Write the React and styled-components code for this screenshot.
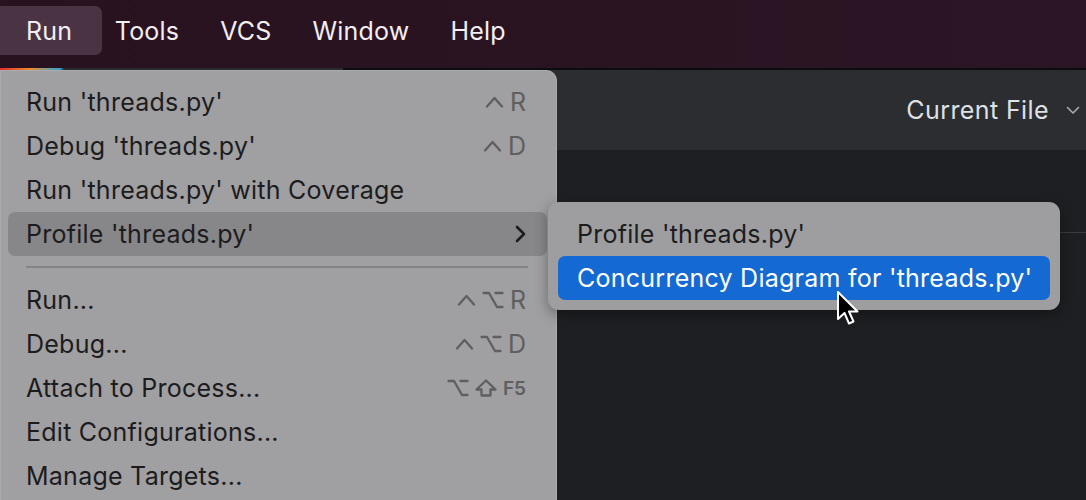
import React from 'react';
import styled, { createGlobalStyle } from 'styled-components';

const GlobalStyle = createGlobalStyle`
  html, body {
    margin: 0;
    padding: 0;
    background: #1e1f22;
    overflow: hidden;
  }
  body {
    font-family: Inter, "Noto Sans", "Liberation Sans", sans-serif;
    -webkit-font-smoothing: antialiased;
  }
`;

const Screen = styled.div`
  position: relative;
  width: 1086px;
  height: 500px;
  display: flex;
  flex-direction: column;
  overflow: hidden;
`;

const MenuBar = styled.div`
  height: 68px;
  flex: none;
  display: flex;
  align-items: flex-start;
  padding-top: 6px;
  box-sizing: border-box;
  background: linear-gradient(90deg, #29121f 0%, #2b1422 60%, #2c1524 100%);
`;

const MenuTitle = styled.div`
  height: 49px;
  display: flex;
  align-items: center;
  padding: ${(p) => (p.$active ? '0 30px 0 26px' : '0 20.5px')};
  margin-right: ${(p) => (p.$active ? '-8px' : '0')};
  border-radius: 0 7px 7px 0;
  background: ${(p) => (p.$active ? '#4a3343' : 'transparent')};
  color: #f2eef1;
  font-size: 25px;
  letter-spacing: 0.2px;
`;

const Strip = styled.div`
  height: 2px;
  flex: none;
  background: linear-gradient(
    90deg,
    #e0302a 0px,
    #f08a2a 30px,
    #2aa5d8 60px,
    #2a2b2e 64px,
    #2a2b2e 343px,
    #0d0d0f 343px
  );
`;

const Toolbar = styled.div`
  height: 80px;
  flex: none;
  display: flex;
  align-items: center;
  justify-content: flex-end;
  padding-right: 6px;
  background: #2b2d30;
`;

const RunConfig = styled.div`
  display: flex;
  align-items: center;
  gap: 17px;
  color: #dfe1e5;
  font-size: 25px;
  letter-spacing: 0.4px;
`;

const Editor = styled.div`
  flex: 1;
  background: #1e1f22;
`;

const TabRow = styled.div`
  height: 82px;
  border-bottom: 1px solid #393b40;
`;

const Dropdown = styled.div`
  position: absolute;
  left: 0;
  top: 70px;
  width: 557px;
  height: 460px;
  box-sizing: border-box;
  padding: 10px 10px 0 8px;
  background: #a09fa1;
  border-radius: 0 11px 0 0;
  box-shadow: 0 0 0 1px rgba(255, 255, 255, 0.12) inset;
`;

const Item = styled.div`
  height: 44px;
  display: flex;
  align-items: center;
  justify-content: space-between;
  padding: 0 21px 0 18px;
  border-radius: 7px;
  background: ${(p) => (p.$hover ? '#878688' : 'transparent')};
  color: #1c1c1e;
  font-size: 25px;
  letter-spacing: 0.25px;
  white-space: nowrap;
`;

const Separator = styled.div`
  height: 22px;
  display: flex;
  align-items: center;
  padding: 0 19px 0 18px;

  &::after {
    content: '';
    flex: 1;
    height: 2px;
    background: #848385;
  }
`;

const Keys = styled.span`
  display: flex;
  align-items: center;
  gap: 6px;
  color: #5f5e60;
  font-size: 25px;
`;

const Key = styled.span`
  font-size: ${(p) => (p.$small ? '19px' : '25px')};
  font-weight: ${(p) => (p.$small ? 600 : 400)};
  letter-spacing: 0;
`;

const Submenu = styled.div`
  position: absolute;
  left: 548px;
  top: 202px;
  width: 512px;
  box-sizing: border-box;
  padding: 10px;
  background: #9e9ea0;
  border-radius: 11px;
  box-shadow: 0 4px 14px rgba(0, 0, 0, 0.35);
`;

const SubItem = styled.div`
  height: 44px;
  display: flex;
  align-items: center;
  padding: 0 12px 0 19px;
  border-radius: 7px;
  background: ${(p) => (p.$selected ? '#1469d2' : 'transparent')};
  color: ${(p) => (p.$selected ? '#ffffff' : '#1c1c1e')};
  font-size: 25px;
  letter-spacing: 0.25px;
  white-space: nowrap;
`;

const Pointer = styled.svg`
  position: absolute;
  left: 835px;
  top: 290px;
`;

const KEY_STROKE = {
  fill: 'none',
  stroke: '#5f5e60',
  strokeWidth: 2.3,
  strokeLinecap: 'round',
  strokeLinejoin: 'round',
};

const Control = () => (
  <svg width="19" height="12" viewBox="0 0 19 12">
    <path d="M2 10.5 L9.5 2 L17 10.5" {...KEY_STROKE} />
  </svg>
);

const Option = () => (
  <svg width="22" height="18" viewBox="0 0 22 18">
    <path d="M1.5 2 H7 L15 16 H20.5 M13.5 2 H20.5" {...KEY_STROKE} />
  </svg>
);

const Shift = () => (
  <svg width="22" height="18" viewBox="0 0 22 18">
    <path d="M11 1.5 L20.5 10.5 H15.5 V16.5 H6.5 V10.5 H1.5 Z" {...KEY_STROKE} />
  </svg>
);

const Chevron = () => (
  <svg width="12" height="18" viewBox="0 0 12 18">
    <path d="M3 2 L10 9 L3 16" fill="none" stroke="#1c1c1e" strokeWidth="2.6" strokeLinecap="round" strokeLinejoin="round" />
  </svg>
);

const DownChevron = () => (
  <svg width="14" height="9" viewBox="0 0 14 9">
    <path d="M1.5 1.5 L7 7 L12.5 1.5" fill="none" stroke="#a8abb0" strokeWidth="1.6" strokeLinecap="round" strokeLinejoin="round" />
  </svg>
);

const SYMBOLS = { ctrl: <Control />, opt: <Option />, shift: <Shift /> };

const MENU = [
  { label: "Run 'threads.py'", keys: ['ctrl', 'R'] },
  { label: "Debug 'threads.py'", keys: ['ctrl', 'D'] },
  { label: "Run 'threads.py' with Coverage" },
  { label: "Profile 'threads.py'", sub: true },
  { separator: true },
  { label: 'Run...', keys: ['ctrl', 'opt', 'R'] },
  { label: 'Debug...', keys: ['ctrl', 'opt', 'D'] },
  { label: 'Attach to Process...', keys: ['opt', 'shift', 'F5'] },
  { label: 'Edit Configurations...' },
  { label: 'Manage Targets...' },
];

const App = () => {
  return (
    <Screen>
      <GlobalStyle />
      <MenuBar>
        <MenuTitle $active>Run</MenuTitle>
        <MenuTitle>Tools</MenuTitle>
        <MenuTitle>VCS</MenuTitle>
        <MenuTitle>Window</MenuTitle>
        <MenuTitle>Help</MenuTitle>
      </MenuBar>
      <Strip />
      <Toolbar>
        <RunConfig>
          Current File
          <DownChevron />
        </RunConfig>
      </Toolbar>
      <Editor>
        <TabRow />
      </Editor>

      <Dropdown>
        {MENU.map((m, i) =>
          m.separator ? (
            <Separator key={i} />
          ) : (
            <Item key={i} $hover={m.sub}>
              <span>{m.label}</span>
              {m.keys && (
                <Keys>
                  {m.keys.map((k) =>
                    SYMBOLS[k] ? (
                      <React.Fragment key={k}>{SYMBOLS[k]}</React.Fragment>
                    ) : (
                      <Key key={k} $small={k === 'F5'}>
                        {k}
                      </Key>
                    )
                  )}
                </Keys>
              )}
              {m.sub && <Chevron />}
            </Item>
          )
        )}
      </Dropdown>

      <Submenu>
        <SubItem>Profile 'threads.py'</SubItem>
        <SubItem $selected>Concurrency Diagram for 'threads.py'</SubItem>
      </Submenu>

      <Pointer width="26" height="40" viewBox="0 0 26 40">
        <path
          d="M3 2 L3 29 L9.5 23 L14 33.5 L18.5 31.5 L14 21.5 L22.5 21.5 Z"
          fill="#000"
          stroke="#fff"
          strokeWidth="2"
          strokeLinejoin="round"
        />
      </Pointer>
    </Screen>
  );
};

export default App;
